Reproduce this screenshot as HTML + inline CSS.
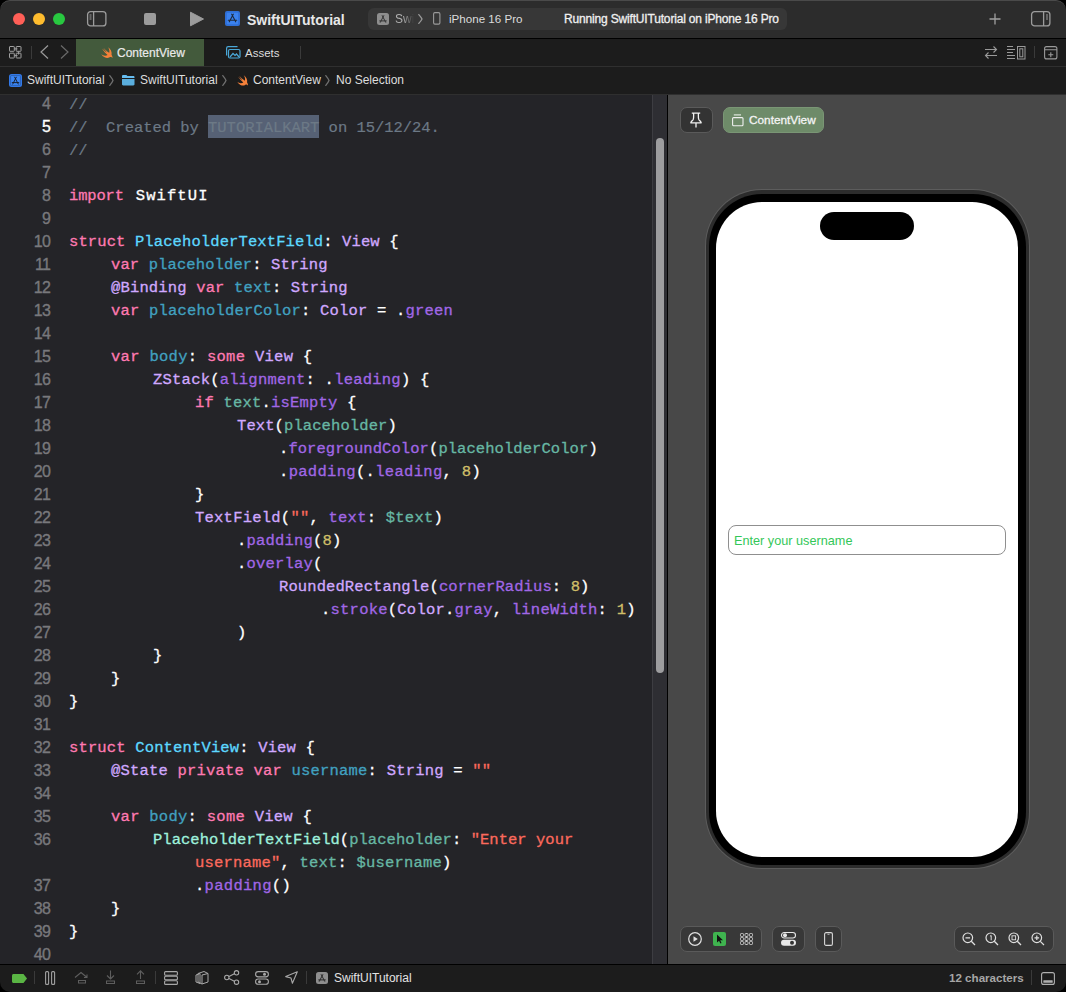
<!DOCTYPE html>
<html><head><meta charset="utf-8">
<style>
*{margin:0;padding:0;box-sizing:border-box}
html,body{width:1066px;height:992px;overflow:hidden;background:#000;font-family:"Liberation Sans",sans-serif}
.abs{position:absolute}
svg{position:absolute;overflow:visible}
#toolbar{left:0;top:0;width:1066px;height:38px;background:#2c2c2c;border-radius:10px 10px 0 0;border-top:1px solid #4a4a4a}
#tbline{left:0;top:38px;width:1066px;height:1px;background:#000}
#tabbar{left:0;top:39px;width:1066px;height:27px;background:#1c1c1c}
#tabsep{left:0;top:66px;width:1066px;height:1px;background:#2f2f2f}
#crumbs{left:0;top:67px;width:1066px;height:27px;background:#1c1c1c}
#crumbsep{left:0;top:94px;width:1066px;height:1px;background:#2f2f2f}
#editor{left:0;top:95px;width:652px;height:869px;background:#242428;overflow:hidden}
#track{left:652px;top:95px;width:15px;height:869px;background:#2e2e33;border-left:1px solid #3d3d42}
#thumb{left:656px;top:138px;width:8px;height:535px;background:#9d9d9f;border-radius:4px}
#divider{left:667px;top:95px;width:1px;height:869px;background:#000}
#canvas{left:668px;top:95px;width:398px;height:869px;background:#484848}
#bottombar{left:0;top:964px;width:1066px;height:28px;background:#1c1c1c;border-top:1px solid #000;border-radius:0 0 10px 10px}
.ui{position:absolute;color:#dedede;font-size:12px;white-space:nowrap;line-height:14px}
.ln{position:absolute;left:0;width:50px;text-align:right;font-family:"Liberation Sans",sans-serif;font-size:16px;letter-spacing:-0.8px;line-height:23px;color:#78787c;-webkit-text-stroke:0.35px #78787c}
.ln.cur{color:#fff;-webkit-text-stroke:0.35px #fff}
.cl{position:absolute;white-space:pre;font-family:"Liberation Mono",monospace;font-size:15.5px;letter-spacing:0.2px;line-height:23px;-webkit-text-stroke:0.3px currentColor}
.cm{letter-spacing:-0.03px;-webkit-text-stroke:0.2px currentColor;position:relative;top:1px}

.grp{position:absolute;background:#383838;border:1px solid #5a5a5a;border-radius:7px}
</style></head>
<body>
<!-- TOOLBAR -->
<div id="toolbar" class="abs"></div>
<div class="abs" style="left:13px;top:13px;width:12px;height:12px;border-radius:6px;background:#ff5f57"></div>
<div class="abs" style="left:33px;top:13px;width:12px;height:12px;border-radius:6px;background:#febc2e"></div>
<div class="abs" style="left:53px;top:13px;width:12px;height:12px;border-radius:6px;background:#28c840"></div>
<svg style="left:87px;top:11px" width="20" height="16" viewBox="0 0 20 16"><rect x="0.6" y="0.6" width="18.3" height="14.3" rx="3" fill="none" stroke="#9c9c9c" stroke-width="1.3"/><line x1="6.6" y1="1" x2="6.6" y2="15" stroke="#9c9c9c" stroke-width="1.3"/><path d="M2.5 4h2M2.5 6h2M2.5 8h2" stroke="#9c9c9c" stroke-width="1"/></svg>
<div class="abs" style="left:144px;top:13px;width:12px;height:12px;border-radius:2px;background:#9c9c9c"></div>
<svg style="left:190px;top:11px" width="14" height="16" viewBox="0 0 14 16"><path d="M0.5 1.2 L13.5 8 L0.5 14.8 Z" fill="#9c9c9c" stroke="#9c9c9c" stroke-width="1" stroke-linejoin="round"/></svg>
<svg style="left:225px;top:11px" width="15" height="15" viewBox="0 0 15 15"><rect x="0" y="0" width="15" height="15" rx="2" fill="#2f6fd6"/><rect x="1.8" y="1.8" width="11.4" height="11.4" rx="1" fill="#3b82ee"/><path d="M8.3 3.2L4.3 10.8M6.7 3.2L10.7 10.8M3.3 9.2H11.7" stroke="#1e2a3a" stroke-width="1.1" fill="none" stroke-linecap="round"/></svg>
<div class="ui" style="left:247px;top:13px;font-size:14px;font-weight:bold;color:#e8e8e8">SwiftUITutorial</div>
<div class="abs" style="left:368px;top:8px;width:419px;height:22px;border-radius:6px;background:#373737"></div>
<svg style="left:377px;top:13px" width="12" height="12" viewBox="0 0 12 12"><rect x="0" y="0" width="12" height="12" rx="2.5" fill="#8e8e8e"/><path d="M6.8 2.6L3.3 9.3M5.2 2.6L8.7 9.3M2.7 7.9H9.3" stroke="#333" stroke-width="1" fill="none" stroke-linecap="round"/></svg>
<div class="ui" style="left:395px;top:12px;color:#b0b0b0;font-size:12px;-webkit-mask-image:linear-gradient(90deg,#000 40%,transparent 100%)">Swi</div>
<svg style="left:418px;top:14px" width="5" height="10" viewBox="0 0 5 10"><path d="M0.8 0.6Q3.2 3.2 4 5Q3.2 6.8 0.8 9.4" fill="none" stroke="#9a9a9a" stroke-width="1.3" stroke-linecap="round"/></svg>
<svg style="left:433px;top:12px" width="8" height="13" viewBox="0 0 8 13"><rect x="0.6" y="0.6" width="6.3" height="11.5" rx="1.3" fill="none" stroke="#9a9a9a" stroke-width="1.1"/></svg>
<div class="ui" style="left:449px;top:12px;color:#dcdcdc;font-size:11.6px">iPhone 16 Pro</div>
<div class="ui" style="left:564px;top:12px;color:#f0f0f0;font-size:12px;letter-spacing:-0.17px;-webkit-text-stroke:0.3px #f0f0f0">Running SwiftUITutorial on iPhone 16 Pro</div>
<svg style="left:989px;top:13px" width="12" height="12" viewBox="0 0 12 12"><path d="M6 0.5V11.5M0.5 6H11.5" stroke="#a0a0a0" stroke-width="1.3"/></svg>
<svg style="left:1031px;top:11px" width="20" height="16" viewBox="0 0 20 16"><rect x="0.6" y="0.6" width="18.3" height="14.3" rx="3" fill="none" stroke="#9c9c9c" stroke-width="1.3"/><line x1="12.6" y1="1" x2="12.6" y2="15" stroke="#9c9c9c" stroke-width="1.3"/><path d="M15 4h2M15 6h2M15 8h2" stroke="#9c9c9c" stroke-width="1"/></svg>
<div id="tbline" class="abs"></div>

<!-- TAB BAR -->
<div id="tabbar" class="abs"></div>
<svg style="left:9px;top:46px" width="13" height="13" viewBox="0 0 13 13"><g fill="none" stroke="#a0a0a0" stroke-width="1"><rect x="0.5" y="0.5" width="4.8" height="4.8" rx="0.5"/><rect x="7.2" y="0.5" width="4.8" height="4.8" rx="0.5"/><rect x="0.5" y="7.2" width="4.8" height="4.8" rx="0.5"/><rect x="7.2" y="7.2" width="4.8" height="4.8" rx="0.5"/><path d="M5.3 2.9H8.5M5.3 9.6H8.5M9.6 5.3V8.5"/></g></svg>
<div class="abs" style="left:31px;top:46px;width:1px;height:13px;background:#3a3a3a"></div>
<svg style="left:40px;top:45px" width="9" height="14" viewBox="0 0 9 14"><path d="M8 0.5 L1 7 L8 13.5" fill="none" stroke="#9a9a9a" stroke-width="1.2"/></svg>
<svg style="left:60px;top:45px" width="9" height="14" viewBox="0 0 9 14"><path d="M1 0.5 L8 7 L1 13.5" fill="none" stroke="#6a6a6a" stroke-width="1.2"/></svg>
<div class="abs" style="left:76px;top:39px;width:128px;height:27px;background:#435a3c"></div>
<svg style="left:100px;top:47px" width="12.5" height="11.5" viewBox="0.6 3.2 20 17.2" preserveAspectRatio="none"><path d="M13.543 3.41c4.114 2.47 6.545 7.162 5.549 11.131-.024.093-.05.181-.076.272l.002.001c2.062 2.538 1.5 5.258 1.236 4.745-1.072-2.086-3.066-1.568-4.088-1.043a6.803 6.803 0 0 1-.281.158l-.02.012-.002.002c-2.115 1.123-4.957 1.205-7.812-.022a12.568 12.568 0 0 1-5.64-4.838c.649.48 1.35.902 2.097 1.252 3.019 1.414 6.051 1.311 8.197-.002C9.651 12.73 7.101 9.69 5.146 7.191a10.628 10.628 0 0 1-1.005-1.384c2.34 2.142 6.038 4.83 7.365 5.576C8.69 8.408 6.208 4.743 6.324 4.86c4.436 4.47 8.528 6.996 8.528 6.996.154.085.27.154.36.213.085-.215.16-.437.224-.668.707-2.588-.09-5.548-1.893-7.992z" fill="#f5813a"/></svg>
<div class="ui" style="left:117px;top:46px;color:#eaeaea;-webkit-text-stroke:0.2px #eaeaea">ContentView</div>
<svg style="left:226px;top:46px" width="15" height="13" viewBox="0 0 15 13"><g fill="none" stroke="#4aa8d8" stroke-width="1.2"><rect x="2.5" y="3.5" width="11.5" height="8.5" rx="1.5"/><path d="M0.6 9.5V2.2C0.6 1.3 1.3 0.6 2.2 0.6H11.5"/><path d="M4 11L7 7.5L9 9.5L10.5 8L13 11"/></g></svg>
<div class="ui" style="left:245px;top:46px;color:#dcdcdc;font-size:11.5px">Assets</div>
<div class="abs" style="left:300px;top:46px;width:1px;height:13px;background:#3a3a3a"></div>
<svg style="left:984px;top:46px" width="14" height="13" viewBox="0 0 14 13"><path d="M1 3.5H12.5M9.5 0.5L12.5 3.5L9.5 6.5M13 9.5H1.5M4.5 6.5L1.5 9.5L4.5 12.5" fill="none" stroke="#9a9a9a" stroke-width="1.1"/></svg>
<svg style="left:1007px;top:46px" width="19" height="14" viewBox="0 0 19 14"><path d="M0 0.5H6M0 3.5H8M0 6.5H6M0 9.5H8M0 12.5H8" stroke="#9a9a9a" stroke-width="1"/><rect x="10.5" y="0.5" width="7.5" height="12.5" fill="none" stroke="#9a9a9a" stroke-width="1"/><rect x="12.8" y="2.8" width="3" height="8" fill="none" stroke="#9a9a9a" stroke-width="1"/></svg>
<div class="abs" style="left:1034px;top:46px;width:1px;height:12px;background:#3a3a3a"></div>
<svg style="left:1044px;top:46px" width="14" height="14" viewBox="0 0 14 14"><rect x="0.6" y="0.6" width="12.3" height="12.3" rx="2" fill="none" stroke="#9a9a9a" stroke-width="1.1"/><path d="M1 3.8H13M6.8 6.3V11.3M4.3 8.8H9.3" stroke="#9a9a9a" stroke-width="1.1"/></svg>
<div id="tabsep" class="abs"></div>

<!-- BREADCRUMBS -->
<div id="crumbs" class="abs"></div>
<svg style="left:9px;top:74px" width="13" height="13" viewBox="0 0 13 13"><rect x="0" y="0" width="13" height="13" rx="2.5" fill="#3279e8"/><rect x="1.6" y="1.6" width="9.8" height="9.8" rx="0.8" fill="#3b86f5" stroke="#28579f" stroke-width="0.7"/><path d="M7.3 3.2L3.8 10M5.7 3.2L9.2 10M3.2 8.6H9.8" stroke="#1a2230" stroke-width="1" fill="none" stroke-linecap="round"/></svg>
<div class="ui" style="left:27px;top:73px">SwiftUITutorial</div>
<svg style="left:108.5px;top:75px" width="5" height="11" viewBox="0 0 5 11"><path d="M0.8 0.6Q3.2 3.5 4 5.5Q3.2 7.5 0.8 10.4" fill="none" stroke="#707070" stroke-width="1.3" stroke-linecap="round"/></svg>
<svg style="left:122px;top:75px" width="12.5" height="10.5" viewBox="0 0 12.5 10.5"><path d="M0 1.2C0 0.5 0.5 0 1.2 0H4.3L5.5 1.1H11.3C12 1.1 12.5 1.6 12.5 2.3V3H0Z" fill="#66bdf0"/><path d="M0 3.9H12.5V9.3C12.5 10 12 10.5 11.3 10.5H1.2C0.5 10.5 0 10 0 9.3Z" fill="#5aaedd"/></svg>
<div class="ui" style="left:140px;top:73px">SwiftUITutorial</div>
<svg style="left:222px;top:75px" width="5" height="11" viewBox="0 0 5 11"><path d="M0.8 0.6Q3.2 3.5 4 5.5Q3.2 7.5 0.8 10.4" fill="none" stroke="#707070" stroke-width="1.3" stroke-linecap="round"/></svg>
<svg style="left:236px;top:75px" width="12" height="11" viewBox="0.6 3.2 20 17.2" preserveAspectRatio="none"><path d="M13.543 3.41c4.114 2.47 6.545 7.162 5.549 11.131-.024.093-.05.181-.076.272l.002.001c2.062 2.538 1.5 5.258 1.236 4.745-1.072-2.086-3.066-1.568-4.088-1.043a6.803 6.803 0 0 1-.281.158l-.02.012-.002.002c-2.115 1.123-4.957 1.205-7.812-.022a12.568 12.568 0 0 1-5.64-4.838c.649.48 1.35.902 2.097 1.252 3.019 1.414 6.051 1.311 8.197-.002C9.651 12.73 7.101 9.69 5.146 7.191a10.628 10.628 0 0 1-1.005-1.384c2.34 2.142 6.038 4.83 7.365 5.576C8.69 8.408 6.208 4.743 6.324 4.86c4.436 4.47 8.528 6.996 8.528 6.996.154.085.27.154.36.213.085-.215.16-.437.224-.668.707-2.588-.09-5.548-1.893-7.992z" fill="#f5813a"/></svg>
<div class="ui" style="left:253px;top:73px">ContentView</div>
<svg style="left:324.5px;top:75px" width="5" height="11" viewBox="0 0 5 11"><path d="M0.8 0.6Q3.2 3.5 4 5.5Q3.2 7.5 0.8 10.4" fill="none" stroke="#707070" stroke-width="1.3" stroke-linecap="round"/></svg>
<div class="ui" style="left:336px;top:73px">No Selection</div>
<div id="crumbsep" class="abs"></div>

<!-- EDITOR -->
<div id="editor" class="abs">
<div class="abs" style="left:208px;top:20px;width:111px;height:23px;background:#566175"></div>
<div class="ln" style="top:-3.00px">4</div>
<div class="cl" style="top:-1.90px;left:69.0px"><span style="color:#6c7986" class="cm">//</span></div>
<div class="ln cur" style="top:20.00px">5</div>
<div class="cl" style="top:21.10px;left:69.0px"><span style="color:#6c7986" class="cm">//  Created by </span><span style="color:#6c7986" class="cm">TUTORIALKART</span><span style="color:#6c7986" class="cm"> on 15/12/24.</span></div>
<div class="ln" style="top:43.00px">6</div>
<div class="cl" style="top:44.10px;left:69.0px"><span style="color:#6c7986" class="cm">//</span></div>
<div class="ln" style="top:66.00px">7</div>
<div class="ln" style="top:89.00px">8</div>
<div class="cl" style="top:90.10px;left:69.0px"><span style="color:#ff7ab2;letter-spacing:-0.15px">import</span><span style="color:#ffffff;letter-spacing:2.5px"> </span><span style="color:#ffffff;letter-spacing:1.1px">SwiftUI</span></div>
<div class="ln" style="top:112.00px">9</div>
<div class="ln" style="top:135.00px">10</div>
<div class="cl" style="top:136.10px;left:69.0px;letter-spacing:0.115px"><span style="color:#ff7ab2">struct</span><span style="color:#ffffff"> </span><span style="color:#5dd8ff">PlaceholderTextField</span><span style="color:#ffffff">: </span><span style="color:#d0a8ff">View</span><span style="color:#ffffff"> {</span></div>
<div class="ln" style="top:158.00px">11</div>
<div class="cl" style="top:159.10px;left:111.0px;letter-spacing:0.114px"><span style="color:#ff7ab2">var</span><span style="color:#ffffff"> </span><span style="color:#41a1c0">placeholder</span><span style="color:#ffffff">: </span><span style="color:#d0a8ff">String</span></div>
<div class="ln" style="top:181.00px">12</div>
<div class="cl" style="top:182.10px;left:111.0px;letter-spacing:0.160px"><span style="color:#d0a8ff">@Binding</span><span style="color:#ffffff"> </span><span style="color:#ff7ab2">var</span><span style="color:#ffffff"> </span><span style="color:#41a1c0">text</span><span style="color:#ffffff">: </span><span style="color:#d0a8ff">String</span></div>
<div class="ln" style="top:204.00px">13</div>
<div class="cl" style="top:205.10px;left:111.0px"><span style="color:#ff7ab2">var</span><span style="color:#ffffff"> </span><span style="color:#41a1c0">placeholderColor</span><span style="color:#ffffff">: </span><span style="color:#d0a8ff">Color</span><span style="color:#ffffff"> = .</span><span style="color:#a167e6">green</span></div>
<div class="ln" style="top:227.00px">14</div>
<div class="ln" style="top:250.00px">15</div>
<div class="cl" style="top:251.10px;left:111.0px;letter-spacing:0.290px"><span style="color:#ff7ab2">var</span><span style="color:#ffffff"> </span><span style="color:#41a1c0">body</span><span style="color:#ffffff">: </span><span style="color:#ff7ab2">some</span><span style="color:#ffffff"> </span><span style="color:#d0a8ff">View</span><span style="color:#ffffff"> {</span></div>
<div class="ln" style="top:273.00px">16</div>
<div class="cl" style="top:274.10px;left:153.0px;letter-spacing:0.230px"><span style="color:#d0a8ff">ZStack</span><span style="color:#ffffff">(</span><span style="color:#a167e6">alignment</span><span style="color:#ffffff">: .</span><span style="color:#a167e6">leading</span><span style="color:#ffffff">) {</span></div>
<div class="ln" style="top:296.00px">17</div>
<div class="cl" style="top:297.10px;left:195.0px"><span style="color:#ff7ab2">if</span><span style="color:#ffffff"> </span><span style="color:#67b7a4">text</span><span style="color:#ffffff">.</span><span style="color:#a167e6">isEmpty</span><span style="color:#ffffff"> {</span></div>
<div class="ln" style="top:319.00px">18</div>
<div class="cl" style="top:320.10px;left:237.0px;letter-spacing:0.100px"><span style="color:#d0a8ff">Text</span><span style="color:#ffffff">(</span><span style="color:#67b7a4">placeholder</span><span style="color:#ffffff">)</span></div>
<div class="ln" style="top:342.00px">19</div>
<div class="cl" style="top:343.10px;left:279.0px;letter-spacing:0.073px"><span style="color:#ffffff">.</span><span style="color:#a167e6">foregroundColor</span><span style="color:#ffffff">(</span><span style="color:#67b7a4">placeholderColor</span><span style="color:#ffffff">)</span></div>
<div class="ln" style="top:365.00px">20</div>
<div class="cl" style="top:366.10px;left:279.0px;letter-spacing:0.320px"><span style="color:#ffffff">.</span><span style="color:#a167e6">padding</span><span style="color:#ffffff">(.</span><span style="color:#a167e6">leading</span><span style="color:#ffffff">, </span><span style="color:#d0bf69">8</span><span style="color:#ffffff">)</span></div>
<div class="ln" style="top:388.00px">21</div>
<div class="cl" style="top:389.10px;left:195.0px"><span style="color:#ffffff">}</span></div>
<div class="ln" style="top:411.00px">22</div>
<div class="cl" style="top:412.10px;left:195.0px;letter-spacing:0.236px"><span style="color:#d0a8ff">TextField</span><span style="color:#ffffff">(</span><span style="color:#fc6a5d">&quot;&quot;</span><span style="color:#ffffff">, </span><span style="color:#a167e6">text</span><span style="color:#ffffff">: </span><span style="color:#67b7a4">$text</span><span style="color:#ffffff">)</span></div>
<div class="ln" style="top:434.00px">23</div>
<div class="cl" style="top:435.10px;left:237.0px"><span style="color:#ffffff">.</span><span style="color:#a167e6">padding</span><span style="color:#ffffff">(</span><span style="color:#d0bf69">8</span><span style="color:#ffffff">)</span></div>
<div class="ln" style="top:457.00px">24</div>
<div class="cl" style="top:458.10px;left:237.0px"><span style="color:#ffffff">.</span><span style="color:#a167e6">overlay</span><span style="color:#ffffff">(</span></div>
<div class="ln" style="top:480.00px">25</div>
<div class="cl" style="top:481.10px;left:279.0px;letter-spacing:0.106px"><span style="color:#d0a8ff">RoundedRectangle</span><span style="color:#ffffff">(</span><span style="color:#a167e6">cornerRadius</span><span style="color:#ffffff">: </span><span style="color:#d0bf69">8</span><span style="color:#ffffff">)</span></div>
<div class="ln" style="top:503.00px">26</div>
<div class="cl" style="top:504.10px;left:321.0px;letter-spacing:0.234px"><span style="color:#ffffff">.</span><span style="color:#a167e6">stroke</span><span style="color:#ffffff">(</span><span style="color:#d0a8ff">Color</span><span style="color:#ffffff">.</span><span style="color:#a167e6">gray</span><span style="color:#ffffff">, </span><span style="color:#a167e6">lineWidth</span><span style="color:#ffffff">: </span><span style="color:#d0bf69">1</span><span style="color:#ffffff">)</span></div>
<div class="ln" style="top:526.00px">27</div>
<div class="cl" style="top:527.10px;left:237.0px"><span style="color:#ffffff">)</span></div>
<div class="ln" style="top:549.00px">28</div>
<div class="cl" style="top:550.10px;left:153.0px"><span style="color:#ffffff">}</span></div>
<div class="ln" style="top:572.00px">29</div>
<div class="cl" style="top:573.10px;left:111.0px"><span style="color:#ffffff">}</span></div>
<div class="ln" style="top:595.00px">30</div>
<div class="cl" style="top:596.10px;left:69.0px"><span style="color:#ffffff">}</span></div>
<div class="ln" style="top:618.00px">31</div>
<div class="ln" style="top:641.00px">32</div>
<div class="cl" style="top:642.10px;left:69.0px;letter-spacing:0.156px"><span style="color:#ff7ab2">struct</span><span style="color:#ffffff"> </span><span style="color:#5dd8ff">ContentView</span><span style="color:#ffffff">: </span><span style="color:#d0a8ff">View</span><span style="color:#ffffff"> {</span></div>
<div class="ln" style="top:664.00px">33</div>
<div class="cl" style="top:665.10px;left:111.0px"><span style="color:#d0a8ff">@State</span><span style="color:#ffffff"> </span><span style="color:#ff7ab2">private</span><span style="color:#ffffff"> </span><span style="color:#ff7ab2">var</span><span style="color:#ffffff"> </span><span style="color:#41a1c0">username</span><span style="color:#ffffff">: </span><span style="color:#d0a8ff">String</span><span style="color:#ffffff"> = </span><span style="color:#fc6a5d">&quot;&quot;</span></div>
<div class="ln" style="top:687.00px">34</div>
<div class="ln" style="top:710.00px">35</div>
<div class="cl" style="top:711.10px;left:111.0px;letter-spacing:0.270px"><span style="color:#ff7ab2">var</span><span style="color:#ffffff"> </span><span style="color:#41a1c0">body</span><span style="color:#ffffff">: </span><span style="color:#ff7ab2">some</span><span style="color:#ffffff"> </span><span style="color:#d0a8ff">View</span><span style="color:#ffffff"> {</span></div>
<div class="ln" style="top:733.00px">36</div>
<div class="cl" style="top:734.10px;left:153.0px;letter-spacing:0.040px"><span style="color:#9ef1dd">PlaceholderTextField</span><span style="color:#ffffff">(</span><span style="color:#67b7a4">placeholder</span><span style="color:#ffffff">: </span><span style="color:#fc6a5d">&quot;Enter your</span></div>
<div class="cl" style="top:757.10px;left:195.0px"><span style="color:#fc6a5d">username&quot;</span><span style="color:#ffffff">, </span><span style="color:#67b7a4">text</span><span style="color:#ffffff">: </span><span style="color:#67b7a4">$username</span><span style="color:#ffffff">)</span></div>
<div class="ln" style="top:779.00px">37</div>
<div class="cl" style="top:780.10px;left:195.0px;letter-spacing:0.300px"><span style="color:#ffffff">.</span><span style="color:#a167e6">padding</span><span style="color:#ffffff">()</span></div>
<div class="ln" style="top:802.00px">38</div>
<div class="cl" style="top:803.10px;left:111.0px"><span style="color:#ffffff">}</span></div>
<div class="ln" style="top:825.00px">39</div>
<div class="cl" style="top:826.10px;left:69.0px"><span style="color:#ffffff">}</span></div>
<div class="ln" style="top:848.00px">40</div>
</div>
<div id="track" class="abs"></div>
<div id="thumb" class="abs"></div>
<div id="divider" class="abs"></div>

<!-- CANVAS -->
<div id="canvas" class="abs"></div>
<div class="abs" style="left:680px;top:107px;width:33px;height:26px;border-radius:7px;background:#333;border:1px solid #5a5a5a"></div>
<svg style="left:689px;top:112px" width="14" height="16" viewBox="0 0 14 16"><path d="M2.8 1.2H11.2M4.6 1.2C4.6 4 4.9 6 4.2 7.5C3.5 8.7 2 9.5 1.8 10.8H12.2C12 9.5 10.5 8.7 9.8 7.5C9.1 6 9.4 4 9.4 1.2M7 10.8V15.5" fill="none" stroke="#f0f0f0" stroke-width="1.3" stroke-linejoin="round"/></svg>
<div class="abs" style="left:723px;top:107px;width:101px;height:26px;border-radius:7px;background:#6e8b69;border:1px solid #7a9675"></div>
<svg style="left:732px;top:114px" width="12" height="13" viewBox="0 0 12 13"><path d="M1.8 0.9H9" stroke="#d8e2d6" stroke-width="1.3"/><rect x="0.6" y="3.6" width="10.4" height="8.2" rx="1" fill="none" stroke="#f0f0f0" stroke-width="1.1"/></svg>
<div class="ui" style="left:749px;top:113px;color:#f4f4f4;font-size:11.8px;-webkit-text-stroke:0.3px #f4f4f4">ContentView</div>

<!-- PHONE -->
<div class="abs" style="left:705px;top:189px;width:325px;height:680px;border-radius:57px;background:#5c5c5c"></div>
<div class="abs" style="left:706px;top:190px;width:323px;height:678px;border-radius:56px;background:#2c2c2c"></div>
<div class="abs" style="left:709px;top:194px;width:317px;height:671px;border-radius:53px;background:#000"></div>
<div class="abs" style="left:716px;top:202px;width:302px;height:655px;border-radius:46px;background:#fff"></div>
<div class="abs" style="left:820px;top:212px;width:94px;height:28px;border-radius:14px;background:#000"></div>
<div class="abs" style="left:728px;top:525px;width:278px;height:30px;border-radius:8px;border:1px solid #8f8f8f;background:#fff"></div>
<div class="ui" style="left:734px;top:534px;color:#34c759;font-size:12.7px">Enter your username</div>

<!-- CANVAS BOTTOM TOOLS -->
<div class="grp" style="left:680px;top:926px;width:82px;height:26px"></div>
<svg style="left:688px;top:932px" width="14" height="14" viewBox="0 0 14 14"><circle cx="7" cy="7" r="6.3" fill="none" stroke="#e0e0e0" stroke-width="1.2"/><path d="M5.5 4.3V9.7L9.8 7Z" fill="#e0e0e0"/></svg>
<div class="abs" style="left:713px;top:932px;width:13px;height:14px;border-radius:2px;background:#3fb34f"></div>
<svg style="left:716px;top:934px" width="8" height="10" viewBox="0 0 8 10"><path d="M1 0.5V8.5L3 6.8L4.5 9.5L5.5 9L4.2 6.3H7Z" fill="#111"/></svg>
<svg style="left:740px;top:933px" width="13" height="12" viewBox="0 0 13 12"><g fill="none" stroke="#c8c8c8" stroke-width="1"><rect x="0.5" y="0.5" width="3" height="3" rx="0.8"/><rect x="5" y="0.5" width="3" height="3" rx="0.8"/><rect x="9.5" y="0.5" width="3" height="3" rx="0.8"/><rect x="0.5" y="4.5" width="3" height="3" rx="0.8"/><rect x="5" y="4.5" width="3" height="3" rx="0.8"/><rect x="9.5" y="4.5" width="3" height="3" rx="0.8"/><rect x="0.5" y="8.5" width="3" height="3" rx="0.8"/><rect x="5" y="8.5" width="3" height="3" rx="0.8"/><rect x="9.5" y="8.5" width="3" height="3" rx="0.8"/></g></svg>
<div class="grp" style="left:772px;top:926px;width:33px;height:26px"></div>
<svg style="left:781px;top:932px" width="15" height="14" viewBox="0 0 15 14"><rect x="0.5" y="0.5" width="14" height="5.5" rx="2.75" fill="none" stroke="#e8e8e8" stroke-width="1.1"/><circle cx="4" cy="3.25" r="2" fill="#e8e8e8"/><rect x="0" y="7.8" width="15" height="6" rx="3" fill="#e8e8e8"/><circle cx="11" cy="10.8" r="2" fill="#333"/></svg>
<div class="grp" style="left:815px;top:926px;width:27px;height:26px"></div>
<svg style="left:824px;top:932px" width="9" height="14" viewBox="0 0 9 14"><rect x="0.6" y="0.6" width="7.8" height="12.8" rx="1.5" fill="none" stroke="#d8d8d8" stroke-width="1.1"/><path d="M3.5 2.3H5.5" stroke="#d8d8d8" stroke-width="0.8"/></svg>
<div class="grp" style="left:954px;top:926px;width:100px;height:26px"></div>
<svg style="left:962px;top:932px" width="14" height="14" viewBox="0 0 14 14"><circle cx="5.8" cy="5.8" r="4.8" fill="none" stroke="#e0e0e0" stroke-width="1.2"/><path d="M9.3 9.3L13 13M3.5 5.8H8.1" stroke="#e0e0e0" stroke-width="1.3"/></svg>
<svg style="left:985px;top:932px" width="14" height="14" viewBox="0 0 14 14"><circle cx="5.8" cy="5.8" r="4.8" fill="none" stroke="#e0e0e0" stroke-width="1.2"/><path d="M9.3 9.3L13 13" stroke="#e0e0e0" stroke-width="1.3"/><path d="M5 4.2L6.2 3.5V8.3" fill="none" stroke="#e0e0e0" stroke-width="1"/></svg>
<svg style="left:1008px;top:932px" width="14" height="14" viewBox="0 0 14 14"><circle cx="5.8" cy="5.8" r="4.8" fill="none" stroke="#e0e0e0" stroke-width="1.2"/><path d="M9.3 9.3L13 13" stroke="#e0e0e0" stroke-width="1.3"/><rect x="4" y="3.8" width="3.6" height="4" fill="none" stroke="#e0e0e0" stroke-width="0.9"/></svg>
<svg style="left:1031px;top:932px" width="14" height="14" viewBox="0 0 14 14"><circle cx="5.8" cy="5.8" r="4.8" fill="none" stroke="#e0e0e0" stroke-width="1.2"/><path d="M9.3 9.3L13 13M3.5 5.8H8.1M5.8 3.5V8.1" stroke="#e0e0e0" stroke-width="1.2"/></svg>

<!-- BOTTOM BAR -->
<div id="bottombar" class="abs"></div>
<svg style="left:12px;top:974px" width="15" height="9" viewBox="0 0 15 9"><path d="M1.5 0H11.5L15 4.5L11.5 9H1.5C0.7 9 0 8.3 0 7.5V1.5C0 0.7 0.7 0 1.5 0Z" fill="#5ab544"/></svg>
<div class="abs" style="left:34px;top:971px;width:1px;height:13px;background:#3a3a3a"></div>
<svg style="left:45px;top:971px" width="11" height="14" viewBox="0 0 11 14"><rect x="0.6" y="0.6" width="3" height="12.8" rx="1" fill="none" stroke="#a0a0a0" stroke-width="1.1"/><rect x="6.6" y="0.6" width="3" height="12.8" rx="1" fill="none" stroke="#a0a0a0" stroke-width="1.1"/></svg>
<svg style="left:74px;top:970px" width="15" height="14" viewBox="0 0 15 14"><path d="M1 7.5L7 2.5L12.5 7M10 7.5H13V4.5" fill="none" stroke="#5e5e5e" stroke-width="1.1"/><rect x="4.5" y="10.5" width="7" height="2.5" fill="none" stroke="#5e5e5e" stroke-width="1"/></svg>
<svg style="left:104px;top:970px" width="13" height="15" viewBox="0 0 13 15"><path d="M6.5 0.5V9M3 5.5L6.5 9L10 5.5" fill="none" stroke="#5e5e5e" stroke-width="1.1"/><rect x="2.5" y="11" width="8" height="2.5" fill="none" stroke="#5e5e5e" stroke-width="1"/></svg>
<svg style="left:134px;top:970px" width="13" height="15" viewBox="0 0 13 15"><path d="M6.5 9V0.8M3 4.3L6.5 0.8L10 4.3" fill="none" stroke="#5e5e5e" stroke-width="1.1"/><rect x="2.5" y="11" width="8" height="2.5" fill="none" stroke="#5e5e5e" stroke-width="1"/></svg>
<div class="abs" style="left:155px;top:971px;width:1px;height:13px;background:#3a3a3a"></div>
<svg style="left:164px;top:971px" width="14" height="14" viewBox="0 0 14 14"><g fill="none" stroke="#a8a8a8" stroke-width="1.1"><rect x="0.6" y="0.6" width="12.8" height="3.6" rx="1"/><rect x="0.6" y="5.2" width="12.8" height="3.6" rx="1"/><rect x="0.6" y="9.8" width="12.8" height="3.6" rx="1"/></g></svg>
<svg style="left:195px;top:970px" width="14" height="15" viewBox="0 0 14 15"><g fill="none" stroke="#a8a8a8" stroke-width="1"><path d="M3 3.5L9 1.5L13 3.5V12L7 14L3 12Z"/><path d="M1 5L5 3.5V13.5L1 12Z"/><path d="M7 5V14M7 5L13 3.5"/></g></svg>
<svg style="left:224px;top:970px" width="16" height="15" viewBox="0 0 16 15"><g fill="none" stroke="#a8a8a8" stroke-width="1.1"><circle cx="2.8" cy="7.5" r="2.2"/><circle cx="12.5" cy="2.8" r="2.2"/><circle cx="12.5" cy="12.2" r="2.2"/><path d="M5 6.5L10.3 3.8M5 8.5L10.3 11.2"/></g></svg>
<svg style="left:255px;top:971px" width="14" height="14" viewBox="0 0 14 14"><g fill="none" stroke="#a8a8a8" stroke-width="1.1"><rect x="0.6" y="0.6" width="12.8" height="5.3" rx="2.6"/><rect x="0.6" y="8" width="12.8" height="5.3" rx="2.6"/></g><circle cx="9.5" cy="3.2" r="1.5" fill="#a8a8a8"/><circle cx="4.5" cy="10.7" r="1.5" fill="#a8a8a8"/></svg>
<svg style="left:285px;top:971px" width="13" height="13" viewBox="0 0 13 13"><path d="M12.3 0.7L0.7 5.6L6 7L7.4 12.3Z" fill="none" stroke="#a8a8a8" stroke-width="1.1" stroke-linejoin="round"/></svg>
<div class="abs" style="left:306px;top:971px;width:1px;height:13px;background:#3a3a3a"></div>
<svg style="left:316px;top:972px" width="12" height="12" viewBox="0 0 12 12"><rect x="0" y="0" width="12" height="12" rx="2.5" fill="#8e8e8e"/><path d="M6.8 2.6L3.3 9.3M5.2 2.6L8.7 9.3M2.7 7.9H9.3" stroke="#2a2a2a" stroke-width="1" fill="none" stroke-linecap="round"/></svg>
<div class="ui" style="left:334px;top:971px;color:#e4e4e4">SwiftUITutorial</div>
<div class="ui" style="left:949px;top:971px;color:#a6a6a6;font-size:11.6px;font-weight:bold">12 characters</div>
<div class="abs" style="left:1031px;top:970px;width:1px;height:15px;background:#3a3a3a"></div>
<svg style="left:1041px;top:972px" width="14" height="13" viewBox="0 0 14 13"><rect x="0.6" y="0.6" width="12.8" height="11.8" rx="2" fill="none" stroke="#b0b0b0" stroke-width="1.1"/><rect x="2.3" y="8.3" width="9.4" height="2.5" rx="0.5" fill="#b0b0b0"/></svg>
</body></html>
